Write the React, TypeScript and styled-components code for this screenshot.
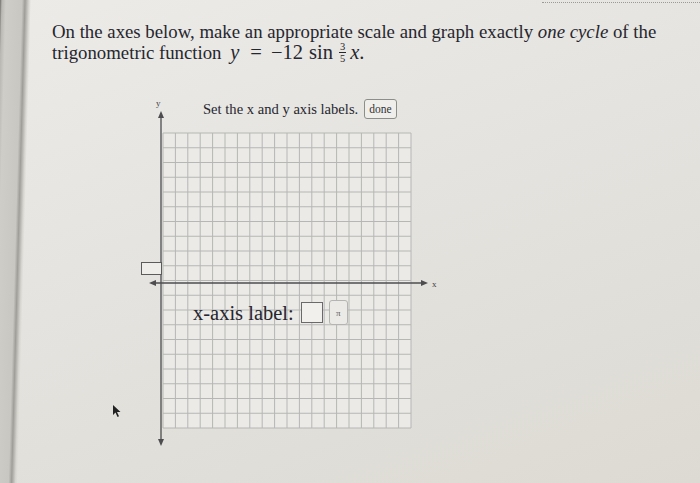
import React from "react";
import styled, { createGlobalStyle } from "styled-components";

const Global = createGlobalStyle`
  html, body { margin: 0; padding: 0; }
  body {
    width: 700px;
    height: 483px;
    overflow: hidden;
    font-family: "Liberation Serif", "DejaVu Serif", serif;
    color: #26262e;
    background:
      linear-gradient(91.6deg, #6f6e6a 0px, #b9b8b3 2px, #cfcdc8 6px, #c9c7c2 22px, #9f9e99 25px, #d8d6d0 29px, rgba(0,0,0,0) 31px),
      linear-gradient(160deg, #ecebe8 0%, #e4e3df 45%, #dddad3 100%);
  }
`;

const Page = styled.div`
  position: relative;
  height: 483px;
  padding: 21px 0 0 52px;
  box-sizing: border-box;
`;

const DottedEdge = styled.div`
  position: absolute;
  top: 2px;
  left: 542px;
  right: 0;
  border-top: 1px dotted #9a9a98;
`;

const Prompt = styled.p`
  margin: 0;
  width: 630px;
  height: 43px;
  font-size: 18.8px;
  line-height: 21px;
`;

const Em = styled.em`
  font-style: italic;
`;

const MathExpr = styled.span`
  font-size: 20.5px;
  margin-left: 4px;
`;

const MathVar = styled.span`
  font-style: italic;
`;

const Op = styled.span`
  margin: 0 9px 0 11px;
`;

const Fn = styled.span`
  margin: 0 0 0 6px;
`;

const Frac = styled.span`
  display: inline-block;
  vertical-align: -3px;
  text-align: center;
  font-size: 10.5px;
  line-height: 9px;
  margin: 0 4px 0 6px;
`;

const FracNum = styled.span`
  display: block;
  border-bottom: 1px solid #26262e;
  padding: 0 1px 1px;
`;

const FracDen = styled.span`
  display: block;
  padding-top: 1px;
`;

const Graph = styled.div`
  position: relative;
  width: 320px;
  height: 360px;
  margin: 31px 0 0 78px;
`;

const Drawing = styled.svg`
  display: block;
`;

const Instruction = styled.div`
  position: absolute;
  left: 73px;
  top: 4px;
  display: flex;
  align-items: center;
  gap: 6px;
  font-size: 14.6px;
  line-height: 20px;
`;

const DoneButton = styled.button`
  font-family: "Liberation Serif", serif;
  font-size: 11.5px;
  color: #333;
  background: #efeeeb;
  border: 1px solid #8d8d8b;
  border-radius: 3px;
  height: 20px;
  padding: 0 4px;
`;

const YBox = styled.div`
  position: absolute;
  left: 11px;
  top: 167px;
  width: 19px;
  height: 11px;
  border: 1.5px solid #5b5b5b;
  background: #eeede9;
`;

const XLabelRow = styled.div`
  position: absolute;
  left: 63px;
  top: 205px;
  display: flex;
  align-items: center;
  gap: 6px;
  font-size: 20.5px;
  line-height: 24px;
`;

const LabelInput = styled.div`
  width: 20px;
  height: 19px;
  border: 1.5px solid #6a6a6a;
  background: #f1f0ed;
  margin-left: 1px;
`;

const PiButton = styled.div`
  width: 17px;
  height: 23px;
  border: 1px solid #b4b4b2;
  border-radius: 3px;
  background: #eceae6;
  display: flex;
  align-items: center;
  justify-content: center;
  font-size: 9px;
  color: #555;
`;

const Cursor = styled.svg`
  position: absolute;
  left: -18px;
  top: 309px;
`;

const GRID_X0 = 33;
const GRID_Y0 = 38;
const COLS = 20;
const ROWS = 20;
const CW = 12.4;
const RH = 14.75;

function GridDrawing() {
  const verticals = Array.from({ length: COLS + 1 }, (_, i) => GRID_X0 + i * CW);
  const horizontals = Array.from({ length: ROWS + 1 }, (_, i) => GRID_Y0 + i * RH);
  const x1 = GRID_X0 + COLS * CW;
  const y1 = GRID_Y0 + ROWS * RH;
  return (
    <Drawing width={320} height={360} viewBox="0 0 320 360">
      <rect x={GRID_X0} y={GRID_Y0} width={COLS * CW} height={ROWS * RH} fill="#ebeae7" />
      {verticals.map((x, i) => (
        <line key={`v${i}`} x1={x} y1={GRID_Y0} x2={x} y2={y1} stroke="#b6b6b4" strokeWidth={1} />
      ))}
      {horizontals.map((y, i) => (
        <line key={`h${i}`} x1={GRID_X0} y1={y} x2={x1} y2={y} stroke="#b6b6b4" strokeWidth={1} />
      ))}
      {/* y axis */}
      <line x1={31} y1={20} x2={31} y2={347} stroke="#4d4d4f" strokeWidth={1.3} />
      <polygon points="31,16 28,23 34,23" fill="#4d4d4f" />
      <polygon points="31,351 28,344 34,344" fill="#4d4d4f" />
      {/* x axis */}
      <line x1={24} y1={188} x2={294} y2={188} stroke="#4d4d4f" strokeWidth={1.3} />
      <polygon points="19,188 26,185 26,191" fill="#4d4d4f" />
      <polygon points="298,188 291,185 291,191" fill="#4d4d4f" />
      <text x={26} y={11} fontSize={9} fontFamily="Liberation Serif, serif" fill="#444">y</text>
      <text x={302} y={192} fontSize={9} fontFamily="Liberation Serif, serif" fill="#444">x</text>
    </Drawing>
  );
}

export default function App() {
  return (
    <>
      <Global />
      <Page>
        <DottedEdge />
        <Prompt>
          {"On the axes below, make an appropriate scale and graph exactly "}
          <Em>one cycle</Em>
          {" of the"}
          {" "}
          {"trigonometric function "}
          <MathExpr>
            <MathVar>y</MathVar>
            <Op>=</Op>
            {"−12"}
            <Fn>sin</Fn>
            <Frac>
              <FracNum>3</FracNum>
              <FracDen>5</FracDen>
            </Frac>
            <MathVar>x</MathVar>
            {"."}
          </MathExpr>
        </Prompt>
        <Graph>
          <GridDrawing />
          <Instruction>
            Set the x and y axis labels.
            <DoneButton>done</DoneButton>
          </Instruction>
          <YBox />
          <XLabelRow>
            x-axis label:
            <LabelInput />
            <PiButton>π</PiButton>
          </XLabelRow>
          <Cursor width={10} height={14} viewBox="0 0 10 14">
            <path d="M1 1 L1 11 L3.5 8.5 L5.5 13 L7 12.3 L5 8 L8.5 8 Z" fill="#222" />
          </Cursor>
        </Graph>
      </Page>
    </>
  );
}
